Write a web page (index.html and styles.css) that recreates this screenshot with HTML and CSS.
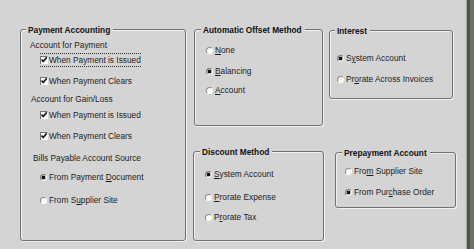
FILE: index.html
```html
<!DOCTYPE html>
<html>
<head>
<meta charset="utf-8">
<link rel="stylesheet" href="styles.css">
</head>
<body>
<div class="main">
  <div class="group g-payment">
    <div class="title t5">Payment Accounting</div>
    <div class="row lbl" style="margin-top:4px;padding-left:9px">Account for Payment</div>
    <div class="row chk focus" style="margin-top:2px;margin-left:19px"><span class="cb"><svg width="8" height="8" viewBox="0 0 8 8"><rect x="0" y="0" width="8" height="8" fill="#fff"/><path d="M0 0.5H7.5M0.5 0V8" stroke="#777" stroke-width="1"/><path d="M1.5 3.5L3.2 5.5L6.8 1.2" fill="none" stroke="#111" stroke-width="1.6"/></svg></span><span class="tx">When Payment is Issued</span></div>
    <div class="row chk" style="margin-top:8px;margin-left:19px"><span class="cb"><svg width="8" height="8" viewBox="0 0 8 8"><rect x="0" y="0" width="8" height="8" fill="#fff"/><path d="M0 0.5H7.5M0.5 0V8" stroke="#777" stroke-width="1"/><path d="M1.5 3.5L3.2 5.5L6.8 1.2" fill="none" stroke="#111" stroke-width="1.6"/></svg></span><span class="tx">When Payment Clears</span></div>
    <div class="row lbl" style="margin-top:6px;padding-left:10px">Account for Gain/Loss</div>
    <div class="row chk" style="margin-top:4px;margin-left:19px"><span class="cb"><svg width="8" height="8" viewBox="0 0 8 8"><rect x="0" y="0" width="8" height="8" fill="#fff"/><path d="M0 0.5H7.5M0.5 0V8" stroke="#777" stroke-width="1"/><path d="M1.5 3.5L3.2 5.5L6.8 1.2" fill="none" stroke="#111" stroke-width="1.6"/></svg></span><span class="tx">When Payment is Issued</span></div>
    <div class="row chk" style="margin-top:9px;margin-left:19px"><span class="cb"><svg width="8" height="8" viewBox="0 0 8 8"><rect x="0" y="0" width="8" height="8" fill="#fff"/><path d="M0 0.5H7.5M0.5 0V8" stroke="#777" stroke-width="1"/><path d="M1.5 3.5L3.2 5.5L6.8 1.2" fill="none" stroke="#111" stroke-width="1.6"/></svg></span><span class="tx">When Payment Clears</span></div>
    <div class="row lbl" style="margin-top:10px;padding-left:12px">Bills Payable Account Source</div>
    <div class="row radio on" style="margin-top:7px;margin-left:19px"><span class="rb"></span><span class="tx">From Payment <u>D</u>ocument</span></div>
    <div class="row radio" style="margin-top:11px;margin-left:19px"><span class="rb"></span><span class="tx">From S<u>u</u>pplier Site</span></div>
  </div>

  <div class="col col2">
    <div class="group g-offset">
      <div class="title">Automatic Offset Method</div>
      <div class="row radio" style="margin-top:9px;margin-left:11px"><span class="rb"></span><span class="tx"><u>N</u>one</span></div>
      <div class="row radio on" style="margin-top:9px;margin-left:11px"><span class="rb"></span><span class="tx"><u>B</u>alancing</span></div>
      <div class="row radio" style="margin-top:7px;margin-left:11px"><span class="rb"></span><span class="tx"><u>A</u>ccount</span></div>
    </div>
    <div class="group g-discount">
      <div class="title">Discount Method</div>
      <div class="row radio on" style="margin-top:11px;margin-left:11px"><span class="rb"></span><span class="tx"><u>S</u>ystem Account</span></div>
      <div class="row radio" style="margin-top:11px;margin-left:11px"><span class="rb"></span><span class="tx"><u>P</u>rorate Expense</span></div>
      <div class="row radio" style="margin-top:8px;margin-left:11px"><span class="rb"></span><span class="tx">P<u>r</u>orate Tax</span></div>
    </div>
  </div>

  <div class="col col3">
    <div class="group g-interest">
      <div class="title t5">Interest</div>
      <div class="row radio on" style="margin-top:16px;margin-left:7px"><span class="rb"></span><span class="tx">S<u>y</u>stem Account</span></div>
      <div class="row radio" style="margin-top:9px;margin-left:7px"><span class="rb"></span><span class="tx">Pr<u>o</u>rate Across Invoices</span></div>
    </div>
    <div class="group g-prepay">
      <div class="title">Prepayment Account</div>
      <div class="row radio" style="margin-top:7px;margin-left:9px"><span class="rb"></span><span class="tx">Fro<u>m</u> Supplier Site</span></div>
      <div class="row radio on" style="margin-top:9px;margin-left:9px"><span class="rb"></span><span class="tx">From Pur<u>c</u>hase Order</span></div>
    </div>
  </div>
</div>
<div class="edge"></div>
</body>
</html>
```
FILE: styles.css
```css
html, body {
  margin: 0;
  padding: 0;
  height: 100%;
}
body {
  display: flex;
  background: #d4d4d4;
  font-family: "Liberation Sans", Arial, sans-serif;
  font-size: 8.3px;
  color: #1c1c1c;
  overflow: hidden;
}
.main {
  flex: 1;
  display: flex;
  align-items: flex-start;
  padding: 29px 0 0 20px;
}
.edge {
  width: 8px;
  background: linear-gradient(to right, #a4a99e 0, #a4a99e 1px, #4f5749 1px, #4f5749 4px, #6b7364 4px, #6b7364 8px);
}
.col {
  display: flex;
  flex-direction: column;
  align-items: flex-start;
}
.group {
  box-sizing: border-box;
  border: 1px solid #727272;
  border-radius: 3px;
  box-shadow: 1px 1px 0 #f0f0f0, inset 1px 1px 0 #f0f0f0;
}
.title {
  width: fit-content;
  height: 10px;
  line-height: 10px;
  margin-top: -5px;
  margin-left: 6px;
  padding: 0 3px 0 2px;
  background: #d4d4d4;
  font-weight: bold;
  color: #111;
}
.title.t5 {
  margin-left: 5px;
}
.g-payment {
  width: 166px;
  height: 212px;
}
.col2 {
  margin-left: 7px;
}
.g-offset {
  width: 129px;
  height: 97px;
  margin-left: 1px;
}
.g-discount {
  width: 131px;
  height: 90px;
  margin-top: 25px;
}
.col3 {
  margin-left: 5px;
  margin-top: 1px;
}
.g-interest {
  width: 124px;
  height: 69px;
}
.g-prepay {
  width: 121px;
  height: 56px;
  margin-top: 53px;
  margin-left: 6px;
}
.row {
  height: 12px;
  line-height: 12px;
  white-space: nowrap;
}
.chk, .radio {
  display: flex;
  align-items: center;
  width: fit-content;
}
.tx {
  white-space: pre;
}
.focus {
  border-top: 1px dotted #333;
  border-bottom: 1px dotted #333;
}
.cb {
  display: block;
  width: 8px;
  height: 8px;
  margin-right: 1px;
}
.cb svg {
  display: block;
}
.rb {
  display: block;
  box-sizing: border-box;
  width: 7px;
  height: 7px;
  margin-right: 2px;
  border-radius: 50%;
  background: #fff;
  border-top: 1px solid #8a8a8a;
  border-left: 1px solid #8a8a8a;
  border-right: 1px solid #fff;
  border-bottom: 1px solid #fff;
}
.radio.on .rb {
  background: radial-gradient(circle at 50% 50%, #111 0, #111 1.6px, #b8b8b8 2px);
  border-top-color: #777;
  border-left-color: #777;
  border-right-color: #eee;
  border-bottom-color: #eee;
}
u {
  text-decoration: underline;
  text-underline-offset: 1px;
}
```
